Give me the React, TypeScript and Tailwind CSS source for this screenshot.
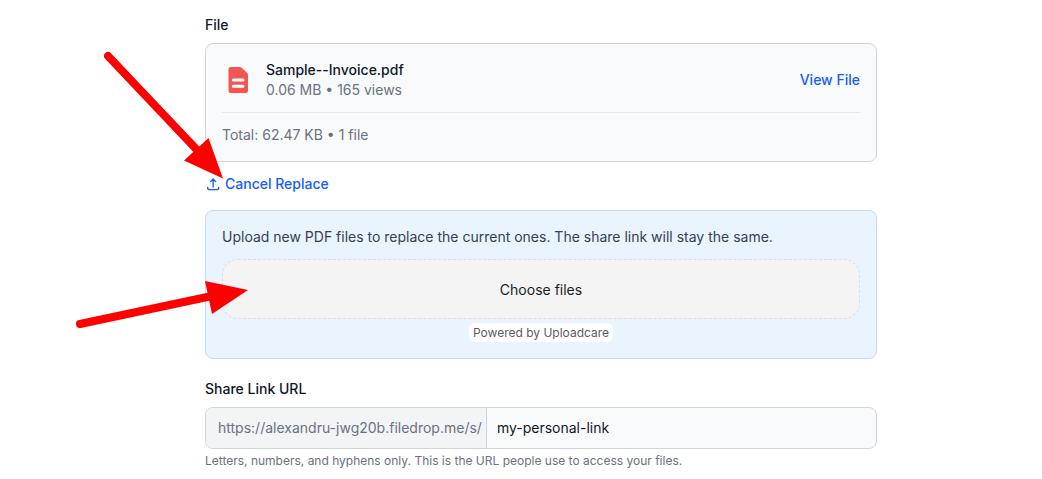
import { useState } from "react";

const UploadIcon = () => (
  <svg
    viewBox="0 0 24 24"
    fill="none"
    stroke="currentColor"
    strokeWidth="2"
    strokeLinecap="round"
    strokeLinejoin="round"
    className="h-4 w-4"
    aria-hidden="true"
  >
    <path d="M4 17v.5a3 3 0 0 0 3 3h10.500a3 3 0 0 0 3-3V17M8.300 8.500L12.200 4.500l3.900 4M12.200 4.500v12" />
  </svg>
);

const PdfIcon = () => (
  <svg viewBox="0 0 32 32" className="h-8 w-8" aria-hidden="true">
    <path
      fill="#f25552"
      d="M9 3h8.700a3 3 0 0 1 2 .8l5.500 5.300a3 3 0 0 1 .8 2v15.400a2.500 2.500 0 0 1-2.500 2.500h-14.500a2.500 2.500 0 0 1-2.500-2.500v-21A2.500 2.500 0 0 1 9 3z"
    />
    <path
      stroke="#fff"
      strokeWidth="3"
      strokeLinecap="round"
      d="M11.300 16h9.700M11.300 22.300h9.700"
    />
  </svg>
);

const Arrows = () => (
  <svg
    viewBox="0 0 260 340"
    className="pointer-events-none absolute top-0 left-0 h-[340px] w-[260px]"
    fill="#ff0000"
    stroke="#ff0000"
    aria-hidden="true"
  >
    <path strokeWidth="8" strokeLinecap="round" d="M108 56L198 151" />
    <path stroke="none" d="M223 178.500L184 160.500L208.500 138z" />
    <path strokeWidth="8" strokeLinecap="round" d="M80 324L212 296" />
    <path stroke="none" d="M248 290L205 281L212 314z" />
  </svg>
);

const App = () => {
  const [slug, setSlug] = useState("my-personal-link");

  return (
    <div className="relative min-h-screen bg-white pt-[15px] pl-10 font-['Inter',sans-serif] text-sm">
      <main className="mx-auto max-w-2xl">
        <h2 className="mb-2 font-medium text-gray-900">File</h2>
        <section className="rounded-lg border border-gray-300 bg-gray-50 p-4 text-gray-500">
          <div className="flex items-center gap-3 border-b border-gray-200 pb-3">
            <PdfIcon />
            <div className="flex-1">
              <p className="font-medium text-gray-900">Sample--Invoice.pdf</p>
              <p>0.06 MB • 165 views</p>
            </div>
            <a href="#" className="font-medium text-blue-600">
              View File
            </a>
          </div>
          <p className="pt-3">Total: 62.47 KB • 1 file</p>
        </section>

        <button
          type="button"
          className="mt-3 flex items-center gap-1 font-medium text-blue-600"
        >
          <UploadIcon />
          Cancel Replace
        </button>

        <section className="mt-4 rounded-lg border border-[#bedbff] bg-[#e9f4ff] p-4">
          <p className="mb-3 text-gray-700">
            Upload new PDF files to replace the current ones. The share link
            will stay the same.
          </p>
          <button
            type="button"
            className="block h-15 w-full rounded-2xl border border-dashed border-[#dedede] bg-[#f4f4f4] pt-0.5 text-[#1c1c1c]"
          >
            Choose files
          </button>
          <a
            href="#"
            className="mx-auto mt-1 block w-fit rounded-md bg-white px-1 text-xs leading-[19px] text-[#5c5c5c]"
          >
            Powered by Uploadcare
          </a>
        </section>

        <label
          htmlFor="slug"
          className="mt-5 mb-2 block font-medium text-gray-900"
        >
          Share Link URL
        </label>
        <div className="flex h-[42px] overflow-hidden rounded-lg border border-gray-300 bg-gray-50">
          <span className="flex items-center border-r border-gray-300 bg-gray-100 pr-1 pl-3 text-gray-500">
            https://alexandru-jwg20b.filedrop.me/s/
          </span>
          <input
            id="slug"
            type="text"
            value={slug}
            onChange={(e) => setSlug(e.target.value)}
            className="min-w-0 flex-1 px-2.5 text-gray-900 focus:outline-none"
          />
        </div>
        <p className="mt-1 text-xs text-gray-500">
          Letters, numbers, and hyphens only. This is the URL people use to
          access your files.
        </p>
      </main>
      <Arrows />
    </div>
  );
};

export default App;
